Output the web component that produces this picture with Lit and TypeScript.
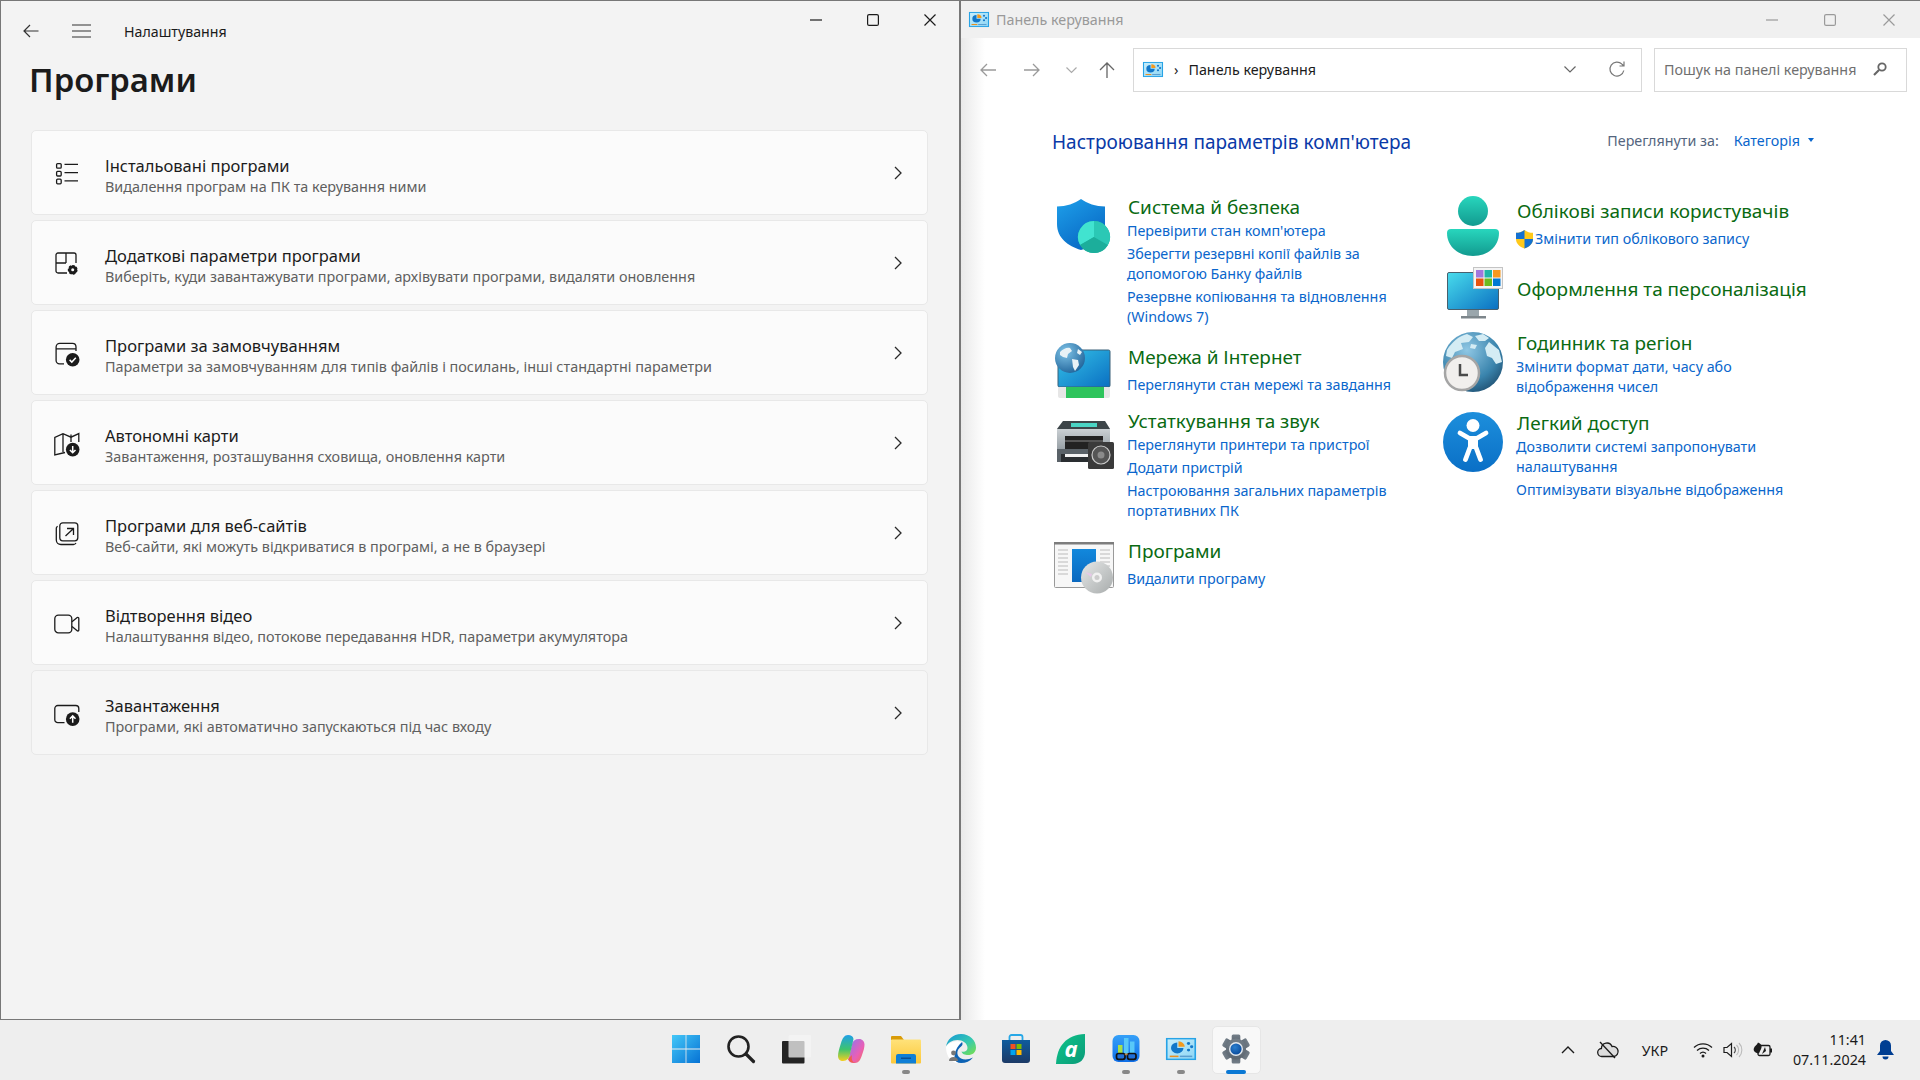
import { LitElement, html, svg, css } from "lit";
import { customElement } from "lit/decorators.js";

const cpIcon = (w: number, h: number) => html`<svg class="cp" width=${w} height=${h} viewBox="0 0 24 20" preserveAspectRatio="none">
  <defs><linearGradient id="cpg" x1="0" y1="0" x2="1" y2="1"><stop offset="0" stop-color="#c8eefb"/><stop offset="1" stop-color="#8ed6f5"/></linearGradient></defs>
  <rect x=".6" y=".6" width="22.800" height="18.800" fill="url(#cpg)" stroke="#27a3e6" stroke-width="1.300"/>
  <path d="M9 4a5 5 0 1 0 5 5H9z" fill="#1277c9"/><path d="M10 3v5h5a5 5 0 0 0-5-5z" fill="#f39a1f"/>
  <circle cx="18" cy="5" r="1.300" fill="#1277c9"/><circle cx="20.500" cy="8" r="1.300" fill="#1277c9"/><circle cx="18" cy="11" r="1.300" fill="#1277c9"/>
  <rect x="3" y="16" width="7" height="1.400" fill="#e89020"/><rect x="11" y="16" width="10" height="1.400" fill="#5a9fd0"/>
</svg>`;

const arrowDot = (dir: string, cy = 18.8) => svg`<circle cx="17.7" cy=${cy} r="6.8" fill="#1b1b1b" stroke="none"/>
  <path d=${dir === "up"
    ? `M17.7 ${cy + 3.6}V${cy - 3.2}M14.9 ${cy - .4}l2.8-2.8 2.8 2.8`
    : `M17.7 ${cy - 3.6}V${cy + 3.2}M14.9 ${cy + .4}l2.8 2.8 2.8-2.8`}" fill="none" stroke="#fff" stroke-width="1.5"/>`;

const settingsIcons = [
  html`<svg class="si" viewBox="0 0 24 24" width="24" height="24">
    <rect x="1.6" y="2.6" width="4.6" height="4.6" rx="1"/><rect x="1.6" y="10.4" width="4.6" height="4.6" rx="1"/><rect x="1.6" y="18.2" width="4.6" height="4.6" rx="1"/>
    <path d="M9.5 3.4H23M9.5 11.6H23M9.5 19.8H23"/></svg>`,
  html`<svg class="si" viewBox="0 0 24 24" width="24" height="24">
    <path d="M12 22H3a2 2 0 0 1-2-2V4a2 2 0 0 1 2-2h16a2 2 0 0 1 2 2v8M11 2v10M1 12h10M1 12v8"/>
    <circle cx="17.7" cy="18.8" r="3.4" fill="#1b1b1b" stroke="#1b1b1b" stroke-width="3" stroke-dasharray="2 1.05"/>
    <circle cx="17.7" cy="18.8" r="4.4" fill="#1b1b1b" stroke="none"/><circle cx="17.7" cy="18.8" r="1.5" fill="#fbfbfb" stroke="none"/></svg>`,
  html`<svg class="si" viewBox="0 0 24 24" width="24" height="24">
    <path d="M9 22.8H4.5a3.4 3.4 0 0 1-3.4-3.4V6a3.6 3.6 0 0 1 3.6-3.6h12.8A3.6 3.6 0 0 1 21 6v4M1.4 7.8H21"/>
    <circle cx="17.7" cy="18.8" r="6.8" fill="#1b1b1b" stroke="none"/><path d="M14.6 18.9l2.2 2.2 4-4.3" stroke="#fff" stroke-width="1.5"/></svg>`,
  html`<svg class="si" viewBox="0 0 24 24" width="24" height="24">
    <path d="M10 21.5L-.2 24V6.5L8 2.6l8 3.6 7.8-3.6V11M8 2.6V21"/>
    <path d="M16 3.5V11" />${arrowDot("down", 18.6)}</svg>`,
  html`<svg class="si" viewBox="0 0 24 24" width="24" height="24">
    <rect x="4.8" y="1.8" width="18" height="18" rx="3"/>
    <path d="M1.3 7v12a4.6 4.6 0 0 0 4.6 4.5h12.500a3 3 0 0 0 2.600-1.500"/><path d="M2.600 5.200C1.800 5.800 1.300 6.500 1.300 7"/>
    <path d="M10.500 15l8-7.500M12 7.500h6.500V14"/></svg>`,
  html`<svg class="si" viewBox="0 0 24 24" width="24" height="24">
    <rect x="-.2" y="4.200" width="17" height="17.600" rx="3.600"/><path d="M17 10.800l5.200-4.200a1 1 0 0 1 1.600.8v11.600a1 1 0 0 1-1.600.8L17 15.600"/></svg>`,
  html`<svg class="si" viewBox="0 0 24 24" width="24" height="24">
    <path d="M9.500 21.700H2.800A3 3 0 0 1-.2 18.700V7.500a3 3 0 0 1 3-3h18a3 3 0 0 1 3 3v3.500"/>${arrowDot("up", 18.1)}</svg>`,
];

const cards = [
  ["Інстальовані програми", "Видалення програм на ПК та керування ними"],
  ["Додаткові параметри програми", "Виберіть, куди завантажувати програми, архівувати програми, видаляти оновлення"],
  ["Програми за замовчуванням", "Параметри за замовчуванням для типів файлів і посилань, інші стандартні параметри"],
  ["Автономні карти", "Завантаження, розташування сховища, оновлення карти"],
  ["Програми для веб-сайтів", "Веб-сайти, які можуть відкриватися в програмі, а не в браузері"],
  ["Відтворення відео", "Налаштування відео, потокове передавання HDR, параметри акумулятора"],
  ["Завантаження", "Програми, які автоматично запускаються під час входу"],
];

const bigIcons = {
  shield: html`<svg class="big" width="64" height="64" viewBox="0 0 64 64">
    <defs><linearGradient id="sh" x1="0" y1="0" x2=".6" y2="1"><stop offset="0" stop-color="#1ea0ea"/><stop offset="1" stop-color="#0868c4"/></linearGradient></defs>
    <path d="M29 5C35 9.500 44 12.500 53 12.500V32C53 44 42 52 29 56 16 52 5 44 5 30V12.500C14 12.500 23 9.500 29 5Z" fill="url(#sh)"/>
    <circle cx="42" cy="43" r="16" fill="#1fb5a3"/>
    <path d="M42 43V27a16 16 0 0 0-13.900 24Z" fill="#41e3d0"/><path d="M42 43l-13.900 8A16 16 0 0 0 55.900 51Z" fill="#1cae9b"/><path d="M42 43V27a16 16 0 0 1 13.900 24Z" fill="#2bc8b5"/></svg>`,
  net: html`<svg class="big" width="64" height="64" viewBox="0 0 64 64">
    <defs><linearGradient id="nm" x1="0" y1="0" x2="1" y2="1"><stop offset="0" stop-color="#35c3e8"/><stop offset="1" stop-color="#0a6fc2"/></linearGradient>
    <radialGradient id="ng" cx=".35" cy=".3" r=".8"><stop offset="0" stop-color="#7fc4e8"/><stop offset="1" stop-color="#1c5f96"/></radialGradient></defs>
    <rect x="6" y="6" width="52" height="37" rx="1.500" fill="url(#nm)" stroke="#3a6078"/>
    <rect x="6" y="43" width="52" height="11" rx="2" fill="#e6e6e6"/><rect x="14" y="43" width="38" height="11" fill="#2ec45c"/>
    <circle cx="18" cy="14" r="15" fill="url(#ng)"/>
    <path d="M8 8c3-3 7-5 10-4l2 3-4 3-1 4-4-1-3-2zM20 15l6 1 1 5-4 6-2-4zM26 5l4 3-2 3-3-2z" fill="#e8f2f6"/></svg>`,
  printer: html`<svg class="big" width="64" height="64" viewBox="0 0 64 64">
    <defs><linearGradient id="pr" x1="0" y1="0" x2="0" y2="1"><stop offset="0" stop-color="#dfe3e6"/><stop offset="1" stop-color="#8e979d"/></linearGradient></defs>
    <path d="M11 13h42l5 8v24H5V21z" fill="url(#pr)"/><path d="M11 13h42l5 8H5z" fill="#3d4549"/><rect x="19" y="15" width="26" height="4" fill="#4ad4c4"/>
    <rect x="13" y="28" width="38" height="13" fill="#222"/><rect x="13" y="32" width="38" height="2" fill="#555"/>
    <path d="M5 41h53v5H13v8H5z" fill="#5a6268"/><rect x="9" y="46" width="42" height="8" fill="#2a2e31"/><rect x="13" y="46" width="36" height="3" fill="#f3f3f3"/>
    <rect x="36" y="34" width="26" height="27" rx="1.500" fill="#3a3a3a"/><circle cx="49" cy="47" r="9" fill="#555" stroke="#c9c9c9" stroke-width="1.200"/><circle cx="49" cy="47" r="3.500" fill="#8a8a8a"/></svg>`,
  prog: html`<svg class="big" width="64" height="64" viewBox="0 0 64 64">
    <defs><linearGradient id="pb" x1="0" y1="0" x2="0" y2="1"><stop offset="0" stop-color="#1288dc"/><stop offset="1" stop-color="#0a68bf"/></linearGradient>
    <linearGradient id="cd" x1="0" y1="0" x2="1" y2="1"><stop offset="0" stop-color="#e6e8e8"/><stop offset="1" stop-color="#a8acac"/></linearGradient></defs>
    <rect x="2.500" y="4.500" width="59" height="45" rx="1" fill="#f7f7f7" stroke="#9a9a9a"/><rect x="2" y="4" width="60" height="2.500" fill="#7d7d7d"/>
    <path d="M6 12h10M6 16h10M6 20h10M6 24h10M6 28h10M6 32h10M6 36h10M48 12h10M48 16h10M48 20h10M48 24h10M48 28h10" stroke="#cfcfcf" stroke-width="1.300"/>
    <rect x="20" y="11" width="24" height="33" fill="url(#pb)"/>
    <circle cx="45" cy="39.500" r="16" fill="url(#cd)"/><path d="M33 34l7 2-1 3z" fill="#e7c8e8"/><circle cx="45" cy="39.500" r="5" fill="#f1f1f1"/><circle cx="45" cy="39.500" r="2.500" fill="#ccc"/></svg>`,
  user: html`<svg class="big" width="64" height="64" viewBox="0 0 64 64">
    <defs><linearGradient id="ug" x1="0" y1="0" x2="0" y2="1"><stop offset="0" stop-color="#28d6bd"/><stop offset="1" stop-color="#129a8f"/></linearGradient></defs>
    <circle cx="32" cy="13" r="15" fill="url(#ug)"/><path d="M10 31h44a4 4 0 0 1 4 4c0 14-12 23-26 23S6 49 6 35a4 4 0 0 1 4-4z" fill="url(#ug)"/></svg>`,
  look: html`<svg class="big" width="64" height="64" viewBox="0 0 64 64">
    <defs><linearGradient id="lm" x1="0" y1="0" x2="1" y2="1"><stop offset="0" stop-color="#48dcec"/><stop offset="1" stop-color="#0b6fc1"/></linearGradient></defs>
    <rect x="6.500" y="-3.500" width="51" height="37" rx="1.500" fill="url(#lm)" stroke="#48606e"/>
    <rect x="26" y="34" width="12" height="6" fill="#9aa6ac"/><rect x="20" y="40" width="25" height="2.500" fill="#7d868b"/>
    <rect x="32.500" y="-8.500" width="29" height="21" fill="#f4f4f4" stroke="#c4c4c4"/>
    <rect x="35" y="-6" width="7.500" height="7.500" fill="#a177dd"/><rect x="43.500" y="-6" width="7.500" height="7.500" fill="#1fb5a6"/><rect x="52" y="-6" width="7.500" height="7.500" fill="#f7981d"/>
    <rect x="35" y="2.500" width="7.500" height="7.500" fill="#e8530e"/><rect x="43.500" y="2.500" width="7.500" height="7.500" fill="#6cbb1d"/><rect x="52" y="2.500" width="7.500" height="7.500" fill="#0078d4"/></svg>`,
  clock: html`<svg class="big" width="64" height="64" viewBox="0 0 64 64">
    <defs><radialGradient id="cg" cx=".4" cy=".3" r=".85"><stop offset="0" stop-color="#8fc7e4"/><stop offset=".6" stop-color="#3a84ad"/><stop offset="1" stop-color="#173f5e"/></radialGradient></defs>
    <circle cx="32" cy="32" r="30" fill="url(#cg)"/>
    <path d="M6 20c5-8 12-14 20-16l6 3-4 5-8 1 2 6-8 3-3 6-6-2zM34 6l8-2 6 4-4 3-6 0zM48 12l10 8 3 12-6 2-4-6-5-2-2-8zM30 14l6 1-2 4-5-1z" fill="#d4ecf4"/>
    <circle cx="21" cy="43" r="17" fill="#f1efed" stroke="#a5a5a5" stroke-width="2.500"/><path d="M19 34v11h8" fill="none" stroke="#4a4a4a" stroke-width="2.500"/></svg>`,
  access: html`<svg class="big" width="64" height="64" viewBox="0 0 64 64">
    <defs><linearGradient id="ag" x1="0" y1="0" x2="0" y2="1"><stop offset="0" stop-color="#1d8fdc"/><stop offset="1" stop-color="#0a6fc6"/></linearGradient></defs>
    <circle cx="32" cy="32" r="30" fill="url(#ag)"/><circle cx="32" cy="15.500" r="6.500" fill="#fff"/>
    <path d="M19 23l9.500 5.500h7L45 23" fill="none" stroke="#fff" stroke-width="4.800" stroke-linecap="round" stroke-linejoin="round"/>
    <rect x="27" y="27" width="10" height="12" fill="#fff"/>
    <path d="M29 37.500L24.500 49.500M35 37.500L39.500 49.500" fill="none" stroke="#fff" stroke-width="4.800" stroke-linecap="round"/></svg>`,
};

const leftCats = [
  { cls: "h150", icon: bigIcons.shield, title: "Система й безпека", m: "m1", links: [["Перевірити стан комп'ютера"], ["Зберегти резервні копії файлів за", "допомогою Банку файлів"], ["Резервне копіювання та відновлення", "(Windows 7)"]] },
  { cls: "h64", icon: bigIcons.net, title: "Мережа й Інтернет", m: "m5", links: [["Переглянути стан мережі та завдання"]] },
  { cls: "h130", icon: bigIcons.printer, title: "Устаткування та звук", m: "m1", links: [["Переглянути принтери та пристрої"], ["Додати пристрій"], ["Настроювання загальних параметрів", "портативних ПК"]] },
  { cls: "", icon: bigIcons.prog, title: "Програми", m: "m5", links: [["Видалити програму"]] },
];
const uac = html`<svg class="uac" width="19" height="20" viewBox="0 0 19 20">
  <path d="M9.500 1C12 3 15 3.800 18 3.800V10c0 4.500-3.500 7.800-8.500 9.500C4.500 17.800 1 14.500 1 10V3.800C4 3.800 7 3 9.500 1z" fill="#ffc91a"/>
  <path d="M9.500 1v9H1V3.800C4 3.800 7 3 9.500 1zM9.500 10H18c0 4.500-3.500 7.800-8.500 9.500z" fill="#1471d1"/></svg>`;
const rightCats = [
  { cls: "h78", icon: bigIcons.user, title: "Облікові записи користувачів", m: "m5", uac: true, links: [["Змінити тип облікового запису"]] },
  { cls: "h54", icon: bigIcons.look, title: "Оформлення та персоналізація", m: "m0", links: [] as string[][] },
  { cls: "h80", icon: bigIcons.clock, title: "Годинник та регіон", m: "m1", links: [["Змінити формат дати, часу або", "відображення чисел"]] },
  { cls: "", icon: bigIcons.access, title: "Легкий доступ", m: "m1", links: [["Дозволити системі запропонувати", "налаштування"], ["Оптимізувати візуальне відображення"]] },
];

const teeth = [0, 60, 120, 180, 240, 300];
const taskIcons = [
  html`<svg width="30" height="30" viewBox="0 0 30 30"><defs><linearGradient id="w" x1="0" y1="0" x2="1" y2="1"><stop offset="0" stop-color="#44c8f8"/><stop offset="1" stop-color="#0672d4"/></linearGradient></defs>
    <path d="M1 1h13.600v13.600H1zM15.400 1H29v13.600H15.400zM1 15.400h13.600V29H1zM15.400 15.400H29V29H15.400z" fill="url(#w)"/></svg>`,
  html`<svg width="30" height="30" viewBox="0 0 30 30"><circle cx="12.500" cy="12.500" r="10" fill="none" stroke="#222" stroke-width="2.600"/><path d="M20 20l7.500 7.500" stroke="#222" stroke-width="3.200" stroke-linecap="round"/></svg>`,
  html`<svg width="30" height="30" viewBox="0 0 30 30"><rect x="1" y="7" width="22.500" height="22.500" rx="1" fill="#242424"/><rect x="7.500" y="1" width="22.500" height="22.500" rx="1" fill="#f4f4f4" fill-opacity=".75"/></svg>`,
  html`<svg width="30" height="30" viewBox="0 0 30 30"><defs>
    <linearGradient id="c1" x1="0" y1="0" x2="0" y2="1"><stop offset="0" stop-color="#1fa0e8"/><stop offset=".55" stop-color="#3ec46e"/><stop offset="1" stop-color="#f5d020"/></linearGradient>
    <linearGradient id="c2" x1="0" y1="0" x2="1" y2="1"><stop offset="0" stop-color="#8a78f0"/><stop offset=".6" stop-color="#e85fb8"/><stop offset="1" stop-color="#f8704a"/></linearGradient></defs>
    <path d="M19 29c-4 0-6-1-6.500-4l3.500-15c.6-3 3-5 7-5 3.500 0 5.500 2.500 5.500 5.500 0 3-1 6.500-2.500 10.500C24.500 26 22.500 29 19 29z" fill="url(#c2)"/>
    <path d="M12 1c3 0 5 1 5.500 4L14 20c-.6 4-3 7-7 7-3 0-5-2-5-5 0-3 1-7 3-13C6.500 4 8.500 1 12 1z" fill="url(#c1)"/>
    <path d="M12 25c1 3 4 4 8 4-3 0-5-3-4-8z" fill="#f0604a"/></svg>`,
  html`<svg width="30" height="30" viewBox="0 0 30 30"><defs><linearGradient id="ex" x1="0" y1="0" x2="0" y2="1"><stop offset="0" stop-color="#ffe27a"/><stop offset="1" stop-color="#fcc83a"/></linearGradient></defs>
    <path d="M0 3a1 1 0 0 1 1-1h9l3 4H0z" fill="#d99b08"/><rect y="5.500" width="30" height="24" rx="1" fill="url(#ex)"/>
    <path d="M5 22a2 2 0 0 1 2-2h16a2 2 0 0 1 2 2v7.500H5z" fill="#0f7fd6"/><rect x="10" y="23.500" width="10" height="1.500" fill="#0a4f94"/></svg>`,
  html`<svg width="30" height="30" viewBox="0 0 30 30"><defs><linearGradient id="ed" x1="0" y1="0" x2="1" y2="1"><stop offset="0" stop-color="#1596d8"/><stop offset=".55" stop-color="#35c9b0"/><stop offset="1" stop-color="#7be04a"/></linearGradient></defs>
    <path d="M15 0c9 0 15 6.500 15 13.500 0 5-3.500 7.500-8 7.500-3 0-6-1-6.500-3.500 3 1 6-.5 6-3.500 0-5-5-8-10-8C6 6 1.500 9 0 13 1 5.500 7 0 15 0z" fill="url(#ed)"/>
    <path d="M16 8c-6.500 0-12 4-12 9 0 6 5 12 11 12 5 0 9-1.800 12-5.500-4 2.200-9 2.500-12 1-4-2-5-7-1.500-10.500 2-2 4-3 2.500-6z" fill="#0c62b4"/>
    <path d="M0 13C0 22 5 29 12 29 6 26 8 15 16 8 9 6 2 9 0 13z" fill="#fff"/><circle cx="7.500" cy="19" r="2.400" fill="#777"/><path d="M3 27c0-3 2-4 4.500-4s4.500 1 4.500 4z" fill="#777"/></svg>`,
  html`<svg width="30" height="30" viewBox="0 0 30 30"><defs><linearGradient id="st" x1="0" y1="0" x2="0" y2="1"><stop offset="0" stop-color="#0f5c9e"/><stop offset="1" stop-color="#1c3a66"/></linearGradient></defs>
    <path d="M8.500 6V3a2 2 0 0 1 2-2h9a2 2 0 0 1 2 2v3" fill="none" stroke="#27a7e6" stroke-width="1.800"/><path d="M1 6h28v20a3 3 0 0 1-3 3H4a3 3 0 0 1-3-3z" fill="url(#st)"/>
    <rect x="9.500" y="10" width="5" height="5" fill="#f25022"/><rect x="15.500" y="10" width="5" height="5" fill="#7fba00"/><rect x="9.500" y="16" width="5" height="5" fill="#00a4ef"/><rect x="15.500" y="16" width="5" height="5" fill="#ffb900"/></svg>`,
  html`<svg width="30" height="30" viewBox="0 0 30 30"><defs><linearGradient id="ap" x1="0" y1="0" x2="1" y2="1"><stop offset="0" stop-color="#0fc58a"/><stop offset="1" stop-color="#0a9a78"/></linearGradient></defs>
    <path d="M29 0v18C29 25 24 30 17 30H0C1 12 10 1 29 0z" fill="url(#ap)"/><text x="15" y="23" class="apt" text-anchor="middle">a</text></svg>`,
  html`<svg width="30" height="30" viewBox="0 0 30 30"><defs><linearGradient id="gl" x1="0" y1="0" x2="0" y2="1"><stop offset="0" stop-color="#35a0f8"/><stop offset="1" stop-color="#0f6fe8"/></linearGradient></defs>
    <rect x="1.500" y="1" width="27" height="27" rx="6" fill="url(#gl)"/><rect x="7" y="11" width="4.500" height="9" fill="#a7e04a"/><rect x="13" y="4" width="4.500" height="16" fill="#58c8f8"/><rect x="19" y="7.500" width="4.500" height="12.500" fill="#58c8f8"/>
    <rect x="5.500" y="19.500" width="8.500" height="5.800" rx="2" fill="#1f6fd8" stroke="#111" stroke-width="1.700"/><rect x="16.500" y="19.500" width="8.500" height="5.800" rx="2" fill="#1f6fd8" stroke="#111" stroke-width="1.700"/><rect x="13.800" y="19.500" width="2.800" height="1.700" fill="#c08040"/></svg>`,
  html`${cpIcon(30, 22)}`,
  html`<svg width="30" height="30" viewBox="0 0 30 30"><defs><radialGradient id="sg" cx=".4" cy=".35" r=".7"><stop offset="0" stop-color="#2a7fd0"/><stop offset="1" stop-color="#0a4a9a"/></radialGradient>
    <linearGradient id="gr" x1="0" y1="0" x2="0" y2="1"><stop offset="0" stop-color="#737e88"/><stop offset="1" stop-color="#5c6670"/></linearGradient></defs>
    <g transform="translate(15 15) scale(.96 1) translate(-15 -15)">
    ${teeth.map((a) => svg`<rect x="10.500" y="0.500" width="9" height="8" rx="1.500" fill="url(#gr)" transform="rotate(${a} 15 15)"/>`)}
    <circle cx="15" cy="15" r="10.500" fill="url(#gr)"/></g><circle cx="15" cy="15" r="7" fill="#e3e8ee"/><circle cx="15" cy="15" r="5.600" fill="url(#sg)"/></svg>`,
];

@customElement("app-root")
export class AppRoot extends LitElement {
  static styles = css`
    :host { display: block; width: 1920px; height: 1080px; overflow: hidden; font-family: "Noto Sans", "Open Sans", sans-serif; background: #eee; color: #1a1a1a; }
    .desk { display: flex; height: 1020px; }
    svg { display: block; flex: none; overflow: visible; }

    .settings { width: 961px; box-sizing: border-box; border: 1px solid #777; border-right-width: 2px; background: #f3f3f3; }
    .s-bar { height: 56px; box-sizing: border-box; padding-top: 5px; padding-bottom: 1px; display: flex; align-items: center; }
    .s-back { width: 60px; display: flex; justify-content: center; }
    .s-menu { width: 40px; display: flex; justify-content: center; }
    .s-title { margin-left: 23px; font-size: 14.2px; }
    .s-ctl { margin-left: auto; display: flex; align-self: flex-start; margin-right: 1px; }
    .ctl { width: 57px; height: 27px; display: flex; align-items: center; justify-content: center; }
    h1 { margin: 1px 0 -1px 28px; font-size: 32.8px; line-height: 44px; font-weight: 600; color: #1b1b1b; }
    .cards { margin: 29px 0 0 30px; width: 897px; display: flex; flex-direction: column; gap: 5px; }
    .card { height: 85px; box-sizing: border-box; border: 1px solid #e8e8e8; border-radius: 5px; background: #fbfbfb; display: flex; align-items: center; padding: 0 25px 0 23px; }
    .card.dim { background: #f6f6f6; }
    .si { fill: none; stroke: #1b1b1b; stroke-width: 1.3; }
    .ct { margin-left: 26px; flex: 1; padding-top: 6px; }
    .t { font-size: 16.5px; line-height: 22px; color: #1b1b1b; }
    .d { font-size: 14.38px; line-height: 20px; margin-top: 0; color: #5f5f5f; }

    .panel { flex: 1; border-top: 1px solid #777; background: linear-gradient(to right, #e9e9e9, #fff 24px); display: flex; flex-direction: column; }
    .p-bar { height: 37px; flex: none; background: #f0f0f0; display: flex; align-items: center; padding-left: 8px; font-size: 14.3px; color: #999; }
    .p-bar .cp { margin-right: 7px; }
    .p-ctl { margin-left: auto; margin-right: 2px; display: flex; }
    .ctl.p { width: 58.5px; }
    .tools { display: flex; padding-top: 10px; height: 44px; }
    .nav { display: flex; align-items: center; justify-content: center; }
    .n1 { width: 54px; } .n2 { width: 34px; } .n3 { width: 44px; } .n4 { width: 28px; }
    .addr, .search { box-sizing: border-box; height: 44px; padding-bottom: 2px; border: 1.500px solid #d9d9d9; background: #fff; display: flex; align-items: center; font-size: 14.3px; }
    .addr { width: 509px; margin-left: 12px; padding-left: 9px; color: #1b1b1b; }
    .addr .cp { margin-right: 11px; }
    .crumb { margin-right: 10px; }
    .a-right { margin-left: auto; display: flex; align-items: center; gap: 33px; padding-right: 16px; }
    .search { width: 253px; margin-left: 12px; padding: 0 19px 2px 9px; color: #6f6f6f; justify-content: space-between; }
    .body { padding: 35px 0 0 91px; }
    .head { display: flex; align-items: center; height: 30px; }
    .head h2 { margin: 0; font-weight: 400; font-size: 19px; line-height: 30px; color: #0a3aa8; }
    .view { margin-left: auto; margin-right: 106px; display: flex; align-items: center; font-size: 14.3px; color: #54657e; padding-bottom: 4px; }
    .view b { font-weight: 400; color: #0a66cc; margin-left: 15px; }
    .view i { width: 0; height: 0; margin-left: 8px; border: 3.500px solid transparent; border-top: 4px solid #0a66cc; border-bottom: 0; }
    .cols { display: flex; }
    .col { width: 389px; padding-top: 37px; }
    .col.r { padding-top: 41px; }
    .cat { display: flex; }
    .h150 { height: 150px; } .h64 { height: 64px; } .h130 { height: 130px; } .h78 { height: 78px; } .h54 { height: 54px; } .h80 { height: 80px; }
    .big { margin-right: 12px; }
    .cat-title { font-size: 18.95px; line-height: 26px; color: #0a6a12; white-space: nowrap; }
    .links { display: flex; flex-direction: column; gap: 3px; margin-left: -1px; font-size: 14.3px; line-height: 20px; color: #0a66cc; white-space: nowrap; }
    .m0 { margin-top: 0; } .m1 { margin-top: 1px; } .m5 { margin-top: 5px; }
    .uacrow { display: flex; align-items: center; margin-left: -1px; gap: 0; }
    .uac { margin-right: 1px; }

    .taskbar { height: 60px; background: #eee; display: grid; grid-template-columns: 1fr auto 1fr; }
    .apps { display: flex; grid-column: 2; margin-left: 2px; }
    .app { width: 55px; position: relative; display: flex; align-items: center; justify-content: center; padding-bottom: 2px; box-sizing: border-box; }
    .app.on::before { content: ""; position: absolute; left: 3px; right: 3px; top: 6px; bottom: 6px; background: #f8f8f8; border: 1px solid #e6e6e6; border-radius: 5px; }
    .app svg { position: relative; }
    .app.run::after { content: ""; position: absolute; bottom: 6px; left: 23.500px; width: 8px; height: 4px; border-radius: 2px; background: #888; }
    .app.on::after { content: ""; position: absolute; bottom: 6px; left: 17.500px; width: 20px; height: 4px; border-radius: 2px; background: #0a78d4; }
    .apt { font: italic 700 22px "Noto Sans", sans-serif; fill: #fff; }
    .tray { grid-column: 3; display: flex; align-items: center; justify-content: flex-end; padding-right: 20px; font-size: 14.3px; }
    .tr { width: 30px; display: flex; justify-content: center; }
    .lang { width: 30px; text-align: center; margin: 0 18px 0 17px; white-space: nowrap; display: flex; justify-content: center; }
    .chev { margin-right: 10px; }
    .clock { margin: 0 4px 0 15px; text-align: right; line-height: 20px; font-size: 14.3px; }
  `;

  render() {
    const g = "#9a9a9a";
    const winCtl = (c: string, cls: string) => html`
      <div class="ctl ${cls}"><svg width="12" height="2" viewBox="0 0 12 2"><path d="M0 1h12" stroke=${c} stroke-width="1.200"/></svg></div>
      <div class="ctl ${cls}"><svg width="12" height="12" viewBox="0 0 12 12"><rect x=".6" y=".6" width="10.800" height="10.800" rx="1.500" fill="none" stroke=${c} stroke-width="1.200"/></svg></div>
      <div class="ctl ${cls}"><svg width="12" height="12" viewBox="0 0 12 12"><path d="M.5.500l11 11M11.500.5l-11 11" stroke=${c} stroke-width="1.200"/></svg></div>`;
    const cat = (c: any) => html`<div class="cat ${c.cls}">${c.icon}<div>
        <div class="cat-title">${c.title}</div>
        <div class="links ${c.m}">
          ${c.links.map((l: string[]) => html`<div class=${c.uac ? "uacrow" : ""}>${c.uac ? uac : ""}<span>${l.map((x, i) => html`${i ? html`<br />` : ""}${x}`)}</span></div>`)}
        </div></div></div>`;
    return html`
      <div class="desk">
        <section class="settings">
          <div class="s-bar">
            <div class="s-back"><svg width="16" height="14" viewBox="0 0 16 14"><path d="M15.500 7H1M7 1L1 7l6 6" fill="none" stroke="#333" stroke-width="1.200"/></svg></div>
            <div class="s-menu"><svg width="19" height="14" viewBox="0 0 19 14"><path d="M0 1h19M0 7h19M0 13h19" stroke="#333" stroke-width="1.200"/></svg></div>
            <div class="s-title">Налаштування</div>
            <div class="s-ctl">${winCtl("#1b1b1b", "")}</div>
          </div>
          <h1>Програми</h1>
          <div class="cards">
            ${cards.map((c, i) => html`<div class="card ${i === 6 ? "dim" : ""}">
              ${settingsIcons[i]}
              <div class="ct"><div class="t">${c[0]}</div><div class="d">${c[1]}</div></div>
              <svg width="8" height="14" viewBox="0 0 8 14"><path d="M1 1l6 6-6 6" fill="none" stroke="#2a2a2a" stroke-width="1.300"/></svg>
            </div>`)}
          </div>
        </section>
        <section class="panel">
          <div class="p-bar">${cpIcon(20, 15)}Панель керування
            <div class="p-ctl">${winCtl(g, "p")}</div>
          </div>
          <div class="tools">
            <div class="nav n1"><svg width="16" height="14" viewBox="0 0 16 14"><path d="M16 7H1M7 1L1 7l6 6" fill="none" stroke=${g} stroke-width="1.300"/></svg></div>
            <div class="nav n2"><svg width="16" height="14" viewBox="0 0 16 14"><path d="M0 7h15M9 1l6 6-6 6" fill="none" stroke=${g} stroke-width="1.300"/></svg></div>
            <div class="nav n3"><svg width="11" height="6" viewBox="0 0 11 6"><path d="M.5.500l5 5 5-5" fill="none" stroke="#aaa" stroke-width="1.200"/></svg></div>
            <div class="nav n4"><svg width="16" height="16" viewBox="0 0 16 16"><path d="M8 16V1M1 8l7-7 7 7" fill="none" stroke="#666" stroke-width="1.300"/></svg></div>
            <div class="addr">${cpIcon(20, 15)}<span class="crumb">›</span>Панель керування
              <div class="a-right">
                <svg width="12" height="7" viewBox="0 0 12 7"><path d="M.5.500L6 6l5.500-5.500" fill="none" stroke="#666" stroke-width="1.200"/></svg>
                <svg width="16" height="16" viewBox="0 0 16 16"><path d="M14.800 9.500A7 7 0 1 1 13 3.200L15 5M15 .5V5h-4.500" fill="none" stroke="#777" stroke-width="1.200"/></svg>
              </div>
            </div>
            <div class="search">Пошук на панелі керування
              <svg width="14" height="14" viewBox="0 0 14 14"><circle cx="9" cy="5" r="3.700" fill="none" stroke="#666" stroke-width="1.800"/><path d="M6 8l-5 5" stroke="#666" stroke-width="2.200"/></svg>
            </div>
          </div>
          <div class="body">
            <div class="head"><h2>Настроювання параметрів комп'ютера</h2>
              <div class="view">Переглянути за:<b>Категорія</b><i></i></div></div>
            <div class="cols">
              <div class="col">${leftCats.map(cat)}</div>
              <div class="col r">${rightCats.map(cat)}</div>
            </div>
          </div>
        </section>
      </div>
      <footer class="taskbar">
        <div class="apps">
          ${taskIcons.map((ic, i) => html`<div class="app ${i === 10 ? "on" : ""} ${[4, 8, 9].includes(i) ? "run" : ""}">${ic}</div>`)}
        </div>
        <div class="tray">
          <div class="tr chev"><svg width="14" height="8" viewBox="0 0 14 8"><path d="M1 7l6-6 6 6" fill="none" stroke="#1b1b1b" stroke-width="1.400"/></svg></div>
          <div class="tr"><svg width="22" height="18" viewBox="0 0 22 18"><path d="M5 15.500a4 4 0 0 1-.6-8A5.500 5.500 0 0 1 15 5.500 4.500 4.500 0 0 1 17 15.500z" fill="#ddd" stroke="#1b1b1b" stroke-width="1.300"/><path d="M3 1l15 16" stroke="#1b1b1b" stroke-width="1.300"/></svg></div>
          <div class="lang">УКР</div>
          <div class="tr"><svg width="20" height="16" viewBox="0 0 20 16"><path d="M1 5.500a13 13 0 0 1 18 0M4 8.500a9 9 0 0 1 12 0M7 11.500a4.500 4.500 0 0 1 6 0" fill="none" stroke="#1b1b1b" stroke-width="1.300"/><circle cx="10" cy="14" r="1.500" fill="#1b1b1b"/></svg></div>
          <div class="tr"><svg width="20" height="16" viewBox="0 0 20 16"><path d="M1 5.500h3L8.500 1.500v13L4 10.500H1z" fill="none" stroke="#1b1b1b" stroke-width="1.200"/><path d="M11 5a4 4 0 0 1 0 6" fill="none" stroke="#444" stroke-width="1.100"/><path d="M13.500 3a7 7 0 0 1 0 10M16 1a10 10 0 0 1 0 14" fill="none" stroke="#bbb" stroke-width="1.100"/></svg></div>
          <div class="tr"><svg width="20" height="16" viewBox="0 0 20 16"><rect x="5" y="3.500" width="12" height="10" rx="1.500" fill="none" stroke="#1b1b1b" stroke-width="1.300"/><rect x="17" y="6.500" width="2" height="4" fill="#1b1b1b"/><path d="M5 .500c3 1 4 3 3.500 5S7 9 6 11.500C3 11 0 9.500 .8 6.500 1.500 4 4 3 5 .500z" fill="#1b1b1b"/><path d="M9 12l3-7 1 4z" fill="#1b1b1b"/></svg></div>
          <div class="clock">11:41<br />07.11.2024</div>
          <div class="tr"><svg width="17" height="20" viewBox="0 0 17 20"><path d="M8.500 0a5.500 5.500 0 0 1 5.500 5.500V11l3 4H0l3-4V5.500A5.500 5.500 0 0 1 8.500 0z" fill="#003e92"/><path d="M5.500 16.500h6a3 3 0 0 1-6 0z" fill="#003e92"/></svg></div>
        </div>
      </footer>`;
  }
}
